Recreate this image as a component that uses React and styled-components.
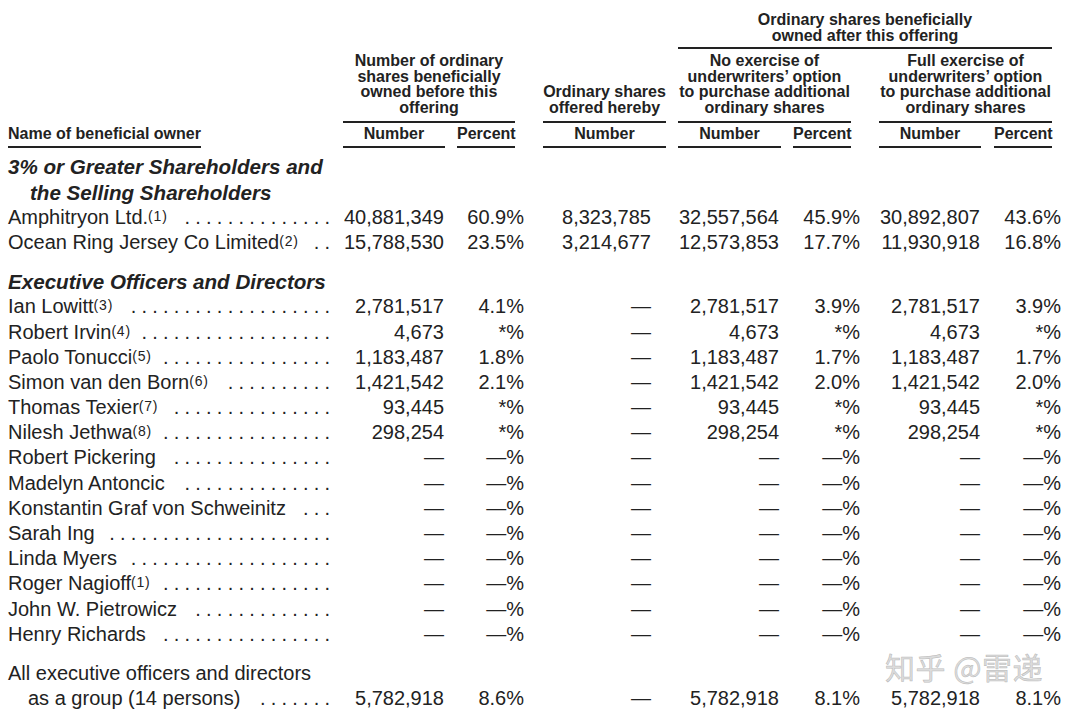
import React, { useLayoutEffect, useRef, useState } from 'react';
import styled, { createGlobalStyle } from 'styled-components';

const GlobalStyle = createGlobalStyle`
  html, body { margin: 0; padding: 0; background: #fff; }
  body { font-family: "Liberation Sans", Arial, Helvetica, sans-serif; color: #222; }
`;

const COLS = '335px 114px 86px 135px 115px 86px 115px 72px';
const INK = '#222';

const Page = styled.div`
  position: relative;
  width: 1080px;
  height: 716px;
  overflow: hidden;
  box-sizing: border-box;
  padding: 12px 8px 0;
  background: #fff;
`;

const Head = styled.div`
  display: grid;
  grid-template-columns: ${COLS};
  font-weight: 700;
  font-size: 16px;
  line-height: 15.5px;
  color: ${INK};
  margin-bottom: 6.4px;
`;

const tierPad = {
  group: '0 0 4px',
  sub: '4px 0 6px',
  col: '3px 0 4px',
};

const Caption = styled.div`
  grid-column: ${(p) => p.$col};
  grid-row: ${(p) => ({ group: 1, sub: 2, col: 3 }[p.$tier])};
  align-self: end;
  justify-self: start;
  width: ${(p) => (p.$w ? `${p.$w}px` : 'auto')};
  text-align: ${(p) => (p.$left ? 'left' : 'center')};
  line-height: ${(p) => (p.$tier === 'col' ? '16px' : '15.5px')};
  white-space: nowrap;
  padding: ${(p) => tierPad[p.$tier]};
  border-bottom: 2px solid ${INK};
`;

const Row = styled.div`
  display: grid;
  grid-template-columns: ${COLS};
  height: 25.2px;
  font-size: 20px;
  line-height: 25.2px;
  white-space: nowrap;
  color: ${INK};
`;

const Gap = styled.div`
  height: 14px;
`;

const Section = styled.div`
  grid-column: 1 / -1;
  font-weight: 700;
  font-style: italic;
  font-size: 20.6px;
  padding-left: ${(p) => (p.$indent ? '22px' : '0')};
`;

const NameCell = styled.div`
  display: flex;
  width: 322px;
  box-sizing: border-box;
  padding-left: ${(p) => (p.$indent ? '20px' : '0')};
`;

const NameText = styled.span`
  flex: none;
`;

const Sup = styled.span`
  font-size: 14px;
  line-height: 1;
  vertical-align: 3px;
  letter-spacing: 0.8px;
`;

const LeaderBox = styled.span`
  flex: 1 1 0;
  min-width: 0;
  margin-left: 9px;
  text-align: right;
  letter-spacing: -0.17px;
`;

const valueWidth = { num: 101, pct: 67, off: 108 };

const Value = styled.div`
  width: ${(p) => valueWidth[p.$kind]}px;
  text-align: right;
`;

const Watermark = styled.div`
  position: absolute;
  left: 885px;
  top: 652px;
  font-family: "Noto Sans CJK SC", "Noto Sans", sans-serif;
  font-size: 30px;
  line-height: 28px;
  letter-spacing: 0.5px;
  color: rgba(215, 215, 215, 0.9);
  -webkit-text-stroke: 0.5px rgba(150, 150, 150, 0.6);
  pointer-events: none;
  white-space: nowrap;
`;

const HALF_PITCH = 5.56 - 0.17;

function Leader() {
  const ref = useRef(null);
  const [count, setCount] = useState(0);
  useLayoutEffect(() => {
    const w = ref.current ? ref.current.getBoundingClientRect().width : 0;
    setCount(Math.max(0, Math.floor((w / HALF_PITCH + 1) / 2)));
  }, []);
  return <LeaderBox ref={ref}>{Array(count).fill('.').join(' ')}</LeaderBox>;
}

const KINDS = ['num', 'pct', 'off', 'num', 'pct', 'num', 'pct'];
const D = '—';
const EMPTY = [D, `${D}%`, D, D, `${D}%`, D, `${D}%`];

const holders = [
  { name: 'Amphitryon Ltd.', note: '(1)', v: ['40,881,349', '60.9%', '8,323,785', '32,557,564', '45.9%', '30,892,807', '43.6%'] },
  { name: 'Ocean Ring Jersey Co Limited', note: '(2)', v: ['15,788,530', '23.5%', '3,214,677', '12,573,853', '17.7%', '11,930,918', '16.8%'] },
];

const officers = [
  { name: 'Ian Lowitt', note: '(3)', v: ['2,781,517', '4.1%', D, '2,781,517', '3.9%', '2,781,517', '3.9%'] },
  { name: 'Robert Irvin', note: '(4)', v: ['4,673', '*%', D, '4,673', '*%', '4,673', '*%'] },
  { name: 'Paolo Tonucci', note: '(5)', v: ['1,183,487', '1.8%', D, '1,183,487', '1.7%', '1,183,487', '1.7%'] },
  { name: 'Simon van den Born', note: '(6)', v: ['1,421,542', '2.1%', D, '1,421,542', '2.0%', '1,421,542', '2.0%'] },
  { name: 'Thomas Texier', note: '(7)', v: ['93,445', '*%', D, '93,445', '*%', '93,445', '*%'] },
  { name: 'Nilesh Jethwa', note: '(8)', v: ['298,254', '*%', D, '298,254', '*%', '298,254', '*%'] },
  { name: 'Robert Pickering', v: EMPTY },
  { name: 'Madelyn Antoncic', v: EMPTY },
  { name: 'Konstantin Graf von Schweinitz', v: EMPTY },
  { name: 'Sarah Ing', v: EMPTY },
  { name: 'Linda Myers', v: EMPTY },
  { name: 'Roger Nagioff', note: '(1)', v: EMPTY },
  { name: 'John W. Pietrowicz', v: EMPTY },
  { name: 'Henry Richards', v: EMPTY },
];

function DataRow({ name, note, v, indent }) {
  return (
    <Row>
      <NameCell $indent={indent}>
        <NameText>
          {name}
          {note && <Sup>{note}</Sup>}
        </NameText>
        <Leader />
      </NameCell>
      {v.map((val, i) => (
        <Value key={i} $kind={KINDS[i]}>
          {val}
        </Value>
      ))}
    </Row>
  );
}

export default function App() {
  return (
    <Page>
      <GlobalStyle />
      <Head>
        <Caption $tier="group" $col="5 / 9" $w={374}>
          Ordinary shares beneficially
          <br />
          owned after this offering
        </Caption>

        <Caption $tier="sub" $col="2 / 4" $w={172}>
          Number of ordinary
          <br />
          shares beneficially
          <br />
          owned before this
          <br />
          offering
        </Caption>
        <Caption $tier="sub" $col="4 / 5" $w={123}>
          Ordinary shares
          <br />
          offered hereby
        </Caption>
        <Caption $tier="sub" $col="5 / 7" $w={173}>
          No exercise of
          <br />
          underwriters’ option
          <br />
          to purchase additional
          <br />
          ordinary shares
        </Caption>
        <Caption $tier="sub" $col="7 / 9" $w={173}>
          Full exercise of
          <br />
          underwriters’ option
          <br />
          to purchase additional
          <br />
          ordinary shares
        </Caption>

        <Caption $tier="col" $col="1 / 2" $left>
          Name of beneficial owner
        </Caption>
        <Caption $tier="col" $col="2 / 3" $w={102}>Number</Caption>
        <Caption $tier="col" $col="3 / 4" $w={58}>Percent</Caption>
        <Caption $tier="col" $col="4 / 5" $w={123}>Number</Caption>
        <Caption $tier="col" $col="5 / 6" $w={103}>Number</Caption>
        <Caption $tier="col" $col="6 / 7" $w={58}>Percent</Caption>
        <Caption $tier="col" $col="7 / 8" $w={102}>Number</Caption>
        <Caption $tier="col" $col="8 / 9" $w={58}>Percent</Caption>
      </Head>

      <Row>
        <Section>3% or Greater Shareholders and</Section>
      </Row>
      <Row>
        <Section $indent>the Selling Shareholders</Section>
      </Row>
      {holders.map((h) => (
        <DataRow key={h.name} {...h} />
      ))}

      <Gap />
      <Row>
        <Section>Executive Officers and Directors</Section>
      </Row>
      {officers.map((o) => (
        <DataRow key={o.name} {...o} />
      ))}

      <Gap />
      <Row>
        <NameCell>
          <NameText>All executive officers and directors</NameText>
        </NameCell>
      </Row>
      <DataRow
        indent
        name="as a group (14 persons)"
        v={['5,782,918', '8.6%', D, '5,782,918', '8.1%', '5,782,918', '8.1%']}
      />

      <Watermark>知乎 @雷递</Watermark>
    </Page>
  );
}
